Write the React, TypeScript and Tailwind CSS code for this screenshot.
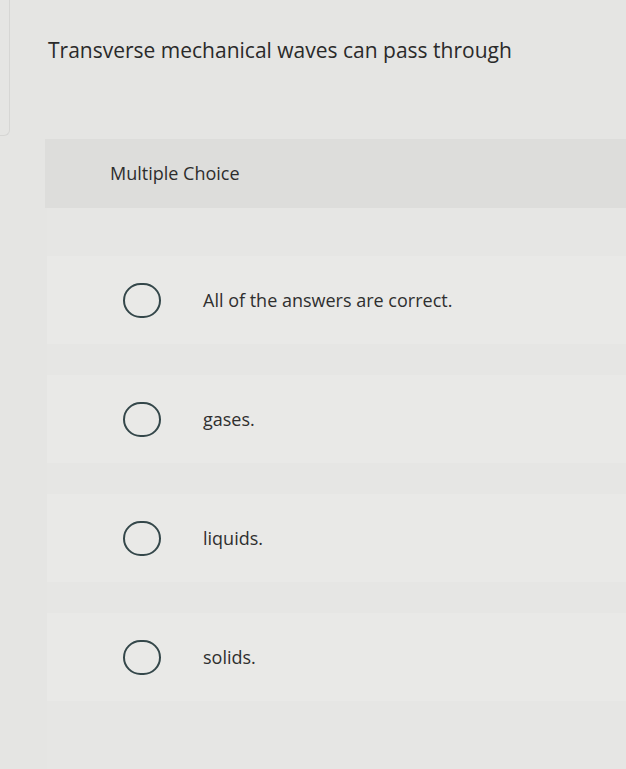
const options = [
  "All of the answers are correct.",
  "gases.",
  "liquids.",
  "solids.",
];

const OptionRow = ({ label }: { label: string }) => (
  <div className="h-[88px] flex items-center pl-[76px] bg-[#e9e9e7]">
    <span className="w-[38px] h-[35px] rounded-full border-2 border-[#34474a] shrink-0" />
    <span className="ml-[42px] text-[18px] text-[#2f2f2f]">{label}</span>
  </div>
);

export default function App() {
  return (
    <div
      className="w-full h-[769px] bg-[#e5e5e3] overflow-hidden flex flex-col"
      style={{ fontFamily: "'Open Sans', Lato, sans-serif" }}
    >
      <div className="h-[139px] flex">
        <div className="w-[10px] h-[136px] border-r border-b border-[#d6d6d4] rounded-br-md" />
        <h1 className="pl-[38px] pt-[36px] text-[21px] leading-7 text-[#2a2a2a]">
          Transverse mechanical waves can pass through
        </h1>
      </div>
      <div className="ml-[45px] h-[69px] bg-[#dddddb] flex items-center pl-[65px]">
        <span className="text-[18px] text-[#2d2d2d]">Multiple Choice</span>
      </div>
      <div className="ml-[47px] flex-1 bg-[#e6e6e4] pt-[48px] flex flex-col gap-[31px]">
        {options.map((o) => (
          <OptionRow key={o} label={o} />
        ))}
      </div>
    </div>
  );
}
